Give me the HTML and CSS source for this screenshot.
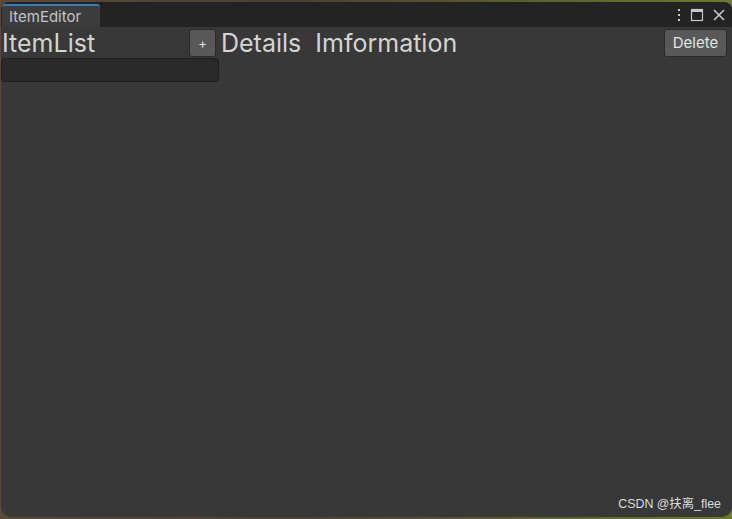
FILE: index.html
```html
<!DOCTYPE html>
<html>
<head>
<meta charset="utf-8">
<link rel="stylesheet" href="styles.css">
</head>
<body>
<div class="window">
  <div class="tabbar">
    <div class="tab">ItemEditor</div>
    <div class="controls">
      <svg width="6" height="14" viewBox="0 0 6 14"><rect x="2" y="1" width="2" height="2" fill="#c8c8c8"/><rect x="2" y="6" width="2" height="2" fill="#c8c8c8"/><rect x="2" y="11" width="2" height="2" fill="#c8c8c8"/></svg>
      <svg width="14" height="14" viewBox="0 0 14 14"><rect x="1.5" y="1.5" width="11" height="11" fill="none" stroke="#c8c8c8" stroke-width="1.2"/><rect x="1" y="1" width="12" height="3" fill="#c8c8c8"/></svg>
      <svg width="14" height="14" viewBox="0 0 14 14"><path d="M2 2 L12 12 M12 2 L2 12" stroke="#c8c8c8" stroke-width="1.6"/></svg>
    </div>
  </div>
  <div class="content">
    <div class="left">
      <div class="row">
        <span class="title">ItemList</span>
        <button class="btn plus">+</button>
      </div>
      <div class="field"></div>
    </div>
    <div class="right">
      <div class="row">
        <span class="title">Details&nbsp; Imformation</span>
        <button class="btn del">Delete</button>
      </div>
    </div>
  </div>
  <div class="watermark">CSDN @扶离_flee</div>
</div>
</body>
</html>
```
FILE: styles.css
```css
html, body { margin: 0; padding: 0; }
body {
  width: 732px;
  height: 519px;
  background: linear-gradient(90deg, #5a4a36 0%, #4b4030 40%, #6b7a2a 100%);
  font-family: Inter, "Noto Sans CJK SC", sans-serif;
  overflow: hidden;
}
.window {
  position: relative;
  margin: 2px 0 0 1px;
  width: 731px;
  height: 515px;
  background: #383838;
  border-radius: 8px 8px 10px 10px;
  overflow: hidden;
  display: flex;
  flex-direction: column;
}
.tabbar {
  height: 25px;
  background: #232323;
  display: flex;
  align-items: flex-end;
  justify-content: space-between;
}
.tab {
  width: 91px;
  height: 21px;
  background: #3c3c3c;
  border-top: 2px solid #3a79bb;
  border-radius: 3px 3px 0 0;
  color: #c4c4c4;
  font-size: 15px;
  line-height: 21px;
  padding-left: 7px;
  margin-left: 1px;
}
.controls {
  display: flex;
  align-items: center;
  gap: 8px;
  height: 25px;
  padding-right: 6px;
}
.content {
  flex: 1;
  display: flex;
  gap: 2px;
}
.left { width: 217px; display: flex; flex-direction: column; }
.right { flex: 1; }
.row {
  display: flex;
  align-items: center;
  justify-content: space-between;
  height: 29px;
  margin-top: 1px;
}
.title {
  font-size: 25px;
  color: #d4d4d4;
  padding-left: 1px;
  white-space: nowrap;
}
.btn {
  font-family: Inter, sans-serif;
  background: #585858;
  color: #e4e4e4;
  border: 1px solid #2a2a2a;
  border-radius: 3px;
  height: 28px;
  padding: 0;
}
.plus { width: 27px; font-size: 13px; margin-right: 2px; }
.del { width: 63px; font-size: 15px; margin-right: 5px; }
.field {
  margin: 1px 0 0 0;
  width: 216px;
  height: 22px;
  background: #2a2a2a;
  border: 1px solid #1e1e1e;
  border-radius: 3px;
}
.watermark {
  position: absolute;
  right: 11px;
  bottom: 5px;
  color: #dcdcdc;
  font-size: 12.4px;
  font-family: "Liberation Sans", "Noto Sans CJK SC", sans-serif;
}
```
